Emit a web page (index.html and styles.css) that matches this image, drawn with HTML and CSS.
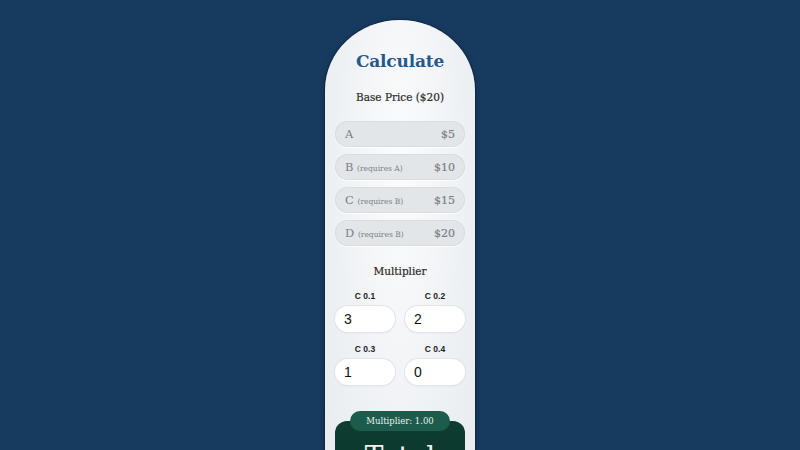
FILE: index.html
```html
<!DOCTYPE html>
<html>
<head>
<meta charset="utf-8">
<link rel="stylesheet" href="styles.css">
</head>
<body>
<div class="card">
  <h1 class="title">Calculate</h1>
  <div class="subtitle">Base Price ($20)</div>
  <div class="options">
    <div class="option"><span class="name">A</span><span class="price">$5</span></div>
    <div class="option"><span class="name">B <small>(requires A)</small></span><span class="price">$10</span></div>
    <div class="option"><span class="name">C <small>(requires B)</small></span><span class="price">$15</span></div>
    <div class="option"><span class="name">D <small>(requires B)</small></span><span class="price">$20</span></div>
  </div>
  <div class="subtitle mult-title">Multiplier</div>
  <div class="grid">
    <div class="field"><label>C 0.1</label><input type="text" value="3"></div>
    <div class="field"><label>C 0.2</label><input type="text" value="2"></div>
    <div class="field"><label>C 0.3</label><input type="text" value="1"></div>
    <div class="field"><label>C 0.4</label><input type="text" value="0"></div>
  </div>
  <div class="result">
    <div class="badge">Multiplier: 1.00</div>
    <div class="total-box"><div class="total">Total</div></div>
  </div>
</div>
</body>
</html>
```
FILE: styles.css
```css
html, body { margin: 0; height: 100%; overflow: hidden; }
body {
  background: #173a5f;
  font-family: "DejaVu Serif", serif;
}
.card {
  width: 150px;
  margin: 20px auto 0;
  box-sizing: border-box;
  padding: 29px 10px 0;
  height: 500px;
  border-radius: 75px 75px 75px 75px / 70px 70px 70px 70px;
  background: radial-gradient(ellipse at 50% 30%, #fbfcfd 0%, #eef1f4 60%, #e6eaee 100%);
  box-shadow: 0 0 0 1px rgba(10,30,60,0.5), 0 2px 6px rgba(0,0,0,0.3);
}
.title {
  margin: 0;
  text-align: center;
  font-size: 17px;
  font-weight: bold;
  color: #25598d;
  line-height: 24px;
  letter-spacing: -0.2px;
}
.subtitle {
  text-align: center;
  font-size: 10.5px;
  color: #2a2a2a;
  line-height: 14px;
  margin-top: 17px;
  -webkit-text-stroke: 0.2px #2a2a2a;
}
.options {
  margin-top: 17px;
  display: flex;
  flex-direction: column;
  gap: 7px;
}
.option {
  height: 26px;
  border-radius: 13px;
  background: #e3e6e9;
  box-shadow: inset 0 0 0 1px #dadde0, 0 1px 1px rgba(255,255,255,0.8);
  display: flex;
  align-items: center;
  justify-content: space-between;
  padding: 0 10px;
  color: #7b7f84;
  font-size: 11.5px;
}
.option .price { font-size: 11px; -webkit-text-stroke: 0.2px #7b7f84; }
.option small { font-size: 7.5px; }
.mult-title { margin-top: 18px; }
.grid {
  margin-top: 13px;
  display: grid;
  grid-template-columns: 1fr 1fr;
  column-gap: 10px;
  row-gap: 12px;
}
.field { display: flex; flex-direction: column; align-items: center; }
.field label {
  font-family: "Liberation Sans", Arial, sans-serif;
  font-weight: bold;
  font-size: 8.5px;
  color: #222;
  line-height: 10px;
  margin-bottom: 5px;
}
.field input {
  width: 60px;
  height: 26px;
  box-sizing: border-box;
  border: none;
  border-radius: 13px;
  background: #fff;
  box-shadow: 0 0 0 1px #e2e5e8, 0 1px 2px rgba(0,0,0,0.08);
  padding: 0 9px;
  font-family: "Liberation Sans", Arial, sans-serif;
  font-size: 14px;
  color: #111;
  outline: none;
}
.result {
  margin-top: 26px;
  display: flex;
  flex-direction: column;
  align-items: center;
}
.badge {
  position: relative;
  z-index: 1;
  width: 100px;
  height: 20px;
  box-sizing: border-box;
  border-radius: 10px;
  background: #1d5b4c;
  color: #e8f0ee;
  font-size: 8.5px;
  line-height: 20px;
  text-align: center;
}
.total-box {
  margin-top: -10px;
  width: 130px;
  height: 80px;
  border-radius: 12px 12px 0 0;
  background: linear-gradient(#0e3d31, #0b3429);
  display: flex;
  justify-content: center;
}
.total {
  color: #f0f0f0;
  font-size: 28px;
  line-height: 34px;
  margin-top: 19px;
}
```
